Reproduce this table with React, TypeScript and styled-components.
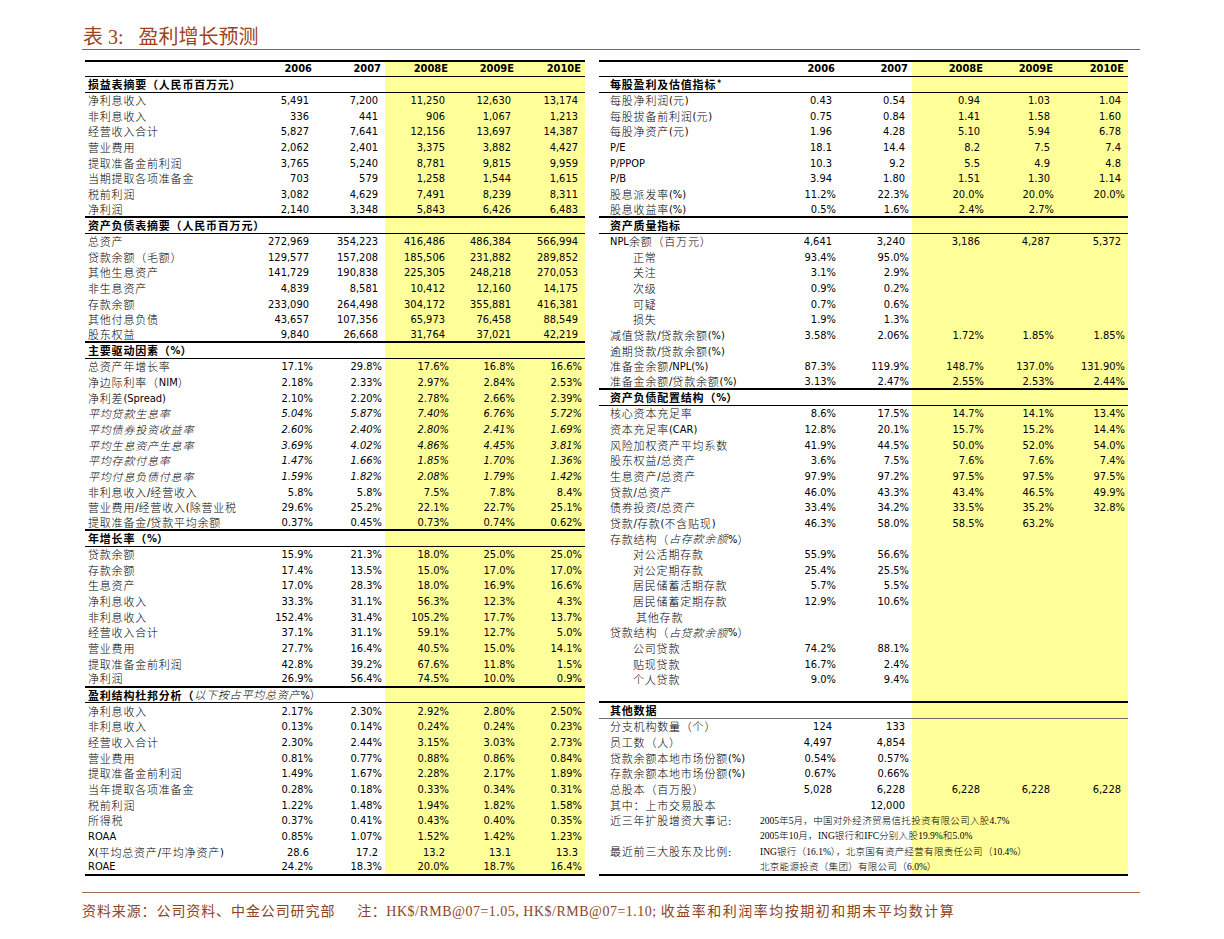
import React from "react";
import styled, { createGlobalStyle } from "styled-components";

type Rule = "thin" | "thick" | "soft";

type Line =
  | { kind: "section"; label: string; rule: Rule; sup?: string }
  | { kind: "row"; label: string; values: string[]; italic?: boolean; indent?: number; rule?: Rule }
  | { kind: "note"; label: string; note: string; rule?: Rule }
  | { kind: "blank"; rule?: Rule };

const YEARS = ["2006", "2007", "2008E", "2009E", "2010E"];
const LEFT_COLS = "173px 58px 69px 67px 66px 67px";
const RIGHT_COLS = "186px 54px 73px 75px 70px 71px";
const CJK = /([\u2E80-\u9FFF\u3000-\u303F\uFF00-\uFFEF]+)/;

const S = (label: string, rule: Rule = "thin", sup?: string): Line => ({ kind: "section", label, rule, sup });
const R = (label: string, values: string[] = [], opts: { italic?: boolean; indent?: number; rule?: Rule } = {}): Line => ({
  kind: "row",
  label,
  values,
  ...opts,
});
const N = (label: string, note: string, rule?: Rule): Line => ({ kind: "note", label, note, rule });

const leftLines: Line[] = [
  S("损益表摘要（人民币百万元）"),
  R("净利息收入", ["5,491", "7,200", "11,250", "12,630", "13,174"]),
  R("非利息收入", ["336", "441", "906", "1,067", "1,213"]),
  R("经营收入合计", ["5,827", "7,641", "12,156", "13,697", "14,387"]),
  R("营业费用", ["2,062", "2,401", "3,375", "3,882", "4,427"]),
  R("提取准备金前利润", ["3,765", "5,240", "8,781", "9,815", "9,959"]),
  R("当期提取各项准备金", ["703", "579", "1,258", "1,544", "1,615"]),
  R("税前利润", ["3,082", "4,629", "7,491", "8,239", "8,311"]),
  R("净利润", ["2,140", "3,348", "5,843", "6,426", "6,483"], { rule: "thick" }),
  S("资产负债表摘要（人民币百万元）"),
  R("总资产", ["272,969", "354,223", "416,486", "486,384", "566,994"]),
  R("贷款余额（毛额）", ["129,577", "157,208", "185,506", "231,882", "289,852"]),
  R("其他生息资产", ["141,729", "190,838", "225,305", "248,218", "270,053"]),
  R("非生息资产", ["4,839", "8,581", "10,412", "12,160", "14,175"]),
  R("存款余额", ["233,090", "264,498", "304,172", "355,881", "416,381"]),
  R("其他付息负债", ["43,657", "107,356", "65,973", "76,458", "88,549"]),
  R("股东权益", ["9,840", "26,668", "31,764", "37,021", "42,219"], { rule: "thick" }),
  S("主要驱动因素（%）"),
  R("总资产年增长率", ["17.1%", "29.8%", "17.6%", "16.8%", "16.6%"]),
  R("净边际利率（NIM）", ["2.18%", "2.33%", "2.97%", "2.84%", "2.53%"]),
  R("净利差(Spread)", ["2.10%", "2.20%", "2.78%", "2.66%", "2.39%"]),
  R("平均贷款生息率", ["5.04%", "5.87%", "7.40%", "6.76%", "5.72%"], { italic: true }),
  R("平均债券投资收益率", ["2.60%", "2.40%", "2.80%", "2.41%", "1.69%"], { italic: true }),
  R("平均生息资产生息率", ["3.69%", "4.02%", "4.86%", "4.45%", "3.81%"], { italic: true }),
  R("平均存款付息率", ["1.47%", "1.66%", "1.85%", "1.70%", "1.36%"], { italic: true }),
  R("平均付息负债付息率", ["1.59%", "1.82%", "2.08%", "1.79%", "1.42%"], { italic: true }),
  R("非利息收入/经营收入", ["5.8%", "5.8%", "7.5%", "7.8%", "8.4%"]),
  R("营业费用/经营收入(除营业税", ["29.6%", "25.2%", "22.1%", "22.7%", "25.1%"]),
  R("提取准备金/贷款平均余额", ["0.37%", "0.45%", "0.73%", "0.74%", "0.62%"], { rule: "thick" }),
  S("年增长率（%）"),
  R("贷款余额", ["15.9%", "21.3%", "18.0%", "25.0%", "25.0%"]),
  R("存款余额", ["17.4%", "13.5%", "15.0%", "17.0%", "17.0%"]),
  R("生息资产", ["17.0%", "28.3%", "18.0%", "16.9%", "16.6%"]),
  R("净利息收入", ["33.3%", "31.1%", "56.3%", "12.3%", "4.3%"]),
  R("非利息收入", ["152.4%", "31.4%", "105.2%", "17.7%", "13.7%"]),
  R("经营收入合计", ["37.1%", "31.1%", "59.1%", "12.7%", "5.0%"]),
  R("营业费用", ["27.7%", "16.4%", "40.5%", "15.0%", "14.1%"]),
  R("提取准备金前利润", ["42.8%", "39.2%", "67.6%", "11.8%", "1.5%"]),
  R("净利润", ["26.9%", "56.4%", "74.5%", "10.0%", "0.9%"], { rule: "thick" }),
  S("盈利结构杜邦分析（_以下按占平均总资产_%）"),
  R("净利息收入", ["2.17%", "2.30%", "2.92%", "2.80%", "2.50%"]),
  R("非利息收入", ["0.13%", "0.14%", "0.24%", "0.24%", "0.23%"]),
  R("经营收入合计", ["2.30%", "2.44%", "3.15%", "3.03%", "2.73%"]),
  R("营业费用", ["0.81%", "0.77%", "0.88%", "0.86%", "0.84%"]),
  R("提取准备金前利润", ["1.49%", "1.67%", "2.28%", "2.17%", "1.89%"]),
  R("当年提取各项准备金", ["0.28%", "0.18%", "0.33%", "0.34%", "0.31%"]),
  R("税前利润", ["1.22%", "1.48%", "1.94%", "1.82%", "1.58%"]),
  R("所得税", ["0.37%", "0.41%", "0.43%", "0.40%", "0.35%"]),
  R("ROAA", ["0.85%", "1.07%", "1.52%", "1.42%", "1.23%"]),
  R("X(平均总资产/平均净资产)", ["28.6", "17.2", "13.2", "13.1", "13.3"]),
  R("ROAE", ["24.2%", "18.3%", "20.0%", "18.7%", "16.4%"], { rule: "thick" }),
];

const IN = 23;

const rightLines: Line[] = [
  S("每股盈利及估值指标", "thin", "*"),
  R("每股净利润(元)", ["0.43", "0.54", "0.94", "1.03", "1.04"]),
  R("每股拔备前利润(元)", ["0.75", "0.84", "1.41", "1.58", "1.60"]),
  R("每股净资产(元)", ["1.96", "4.28", "5.10", "5.94", "6.78"]),
  R("P/E", ["18.1", "14.4", "8.2", "7.5", "7.4"]),
  R("P/PPOP", ["10.3", "9.2", "5.5", "4.9", "4.8"]),
  R("P/B", ["3.94", "1.80", "1.51", "1.30", "1.14"]),
  R("股息派发率(%)", ["11.2%", "22.3%", "20.0%", "20.0%", "20.0%"]),
  R("股息收益率(%)", ["0.5%", "1.6%", "2.4%", "2.7%", ""], { rule: "thick" }),
  S("资产质量指标"),
  R("NPL余额（百万元）", ["4,641", "3,240", "3,186", "4,287", "5,372"]),
  R("正常", ["93.4%", "95.0%"], { indent: IN }),
  R("关注", ["3.1%", "2.9%"], { indent: IN }),
  R("次级", ["0.9%", "0.2%"], { indent: IN }),
  R("可疑", ["0.7%", "0.6%"], { indent: IN }),
  R("损失", ["1.9%", "1.3%"], { indent: IN }),
  R("减值贷款/贷款余额(%)", ["3.58%", "2.06%", "1.72%", "1.85%", "1.85%"]),
  R("逾期贷款/贷款余额(%)"),
  R("准备金余额/NPL(%)", ["87.3%", "119.9%", "148.7%", "137.0%", "131.90%"]),
  R("准备金余额/贷款余额(%)", ["3.13%", "2.47%", "2.55%", "2.53%", "2.44%"], { rule: "thick" }),
  S("资产负债配置结构（%）"),
  R("核心资本充足率", ["8.6%", "17.5%", "14.7%", "14.1%", "13.4%"]),
  R("资本充足率(CAR)", ["12.8%", "20.1%", "15.7%", "15.2%", "14.4%"]),
  R("风险加权资产平均系数", ["41.9%", "44.5%", "50.0%", "52.0%", "54.0%"]),
  R("股东权益/总资产", ["3.6%", "7.5%", "7.6%", "7.6%", "7.4%"]),
  R("生息资产/总资产", ["97.9%", "97.2%", "97.5%", "97.5%", "97.5%"]),
  R("贷款/总资产", ["46.0%", "43.3%", "43.4%", "46.5%", "49.9%"]),
  R("债券投资/总资产", ["33.4%", "34.2%", "33.5%", "35.2%", "32.8%"]),
  R("贷款/存款(不含贴现)", ["46.3%", "58.0%", "58.5%", "63.2%", ""]),
  R("存款结构（_占存款余额_%）"),
  R("对公活期存款", ["55.9%", "56.6%"], { indent: IN }),
  R("对公定期存款", ["25.4%", "25.5%"], { indent: IN }),
  R("居民储蓄活期存款", ["5.7%", "5.5%"], { indent: IN }),
  R("居民储蓄定期存款", ["12.9%", "10.6%"], { indent: IN }),
  R("其他存款", [], { indent: IN + 3 }),
  R("贷款结构（_占贷款余额_%）"),
  R("公司贷款", ["74.2%", "88.1%"], { indent: IN }),
  R("贴现贷款", ["16.7%", "2.4%"], { indent: IN }),
  R("个人贷款", ["9.0%", "9.4%"], { indent: IN }),
  { kind: "blank", rule: "thick" },
  S("其他数据", "soft"),
  R("分支机构数量（个）", ["124", "133"]),
  R("员工数（人）", ["4,497", "4,854"]),
  R("贷款余额本地市场份额(%)", ["0.54%", "0.57%"]),
  R("存款余额本地市场份额(%)", ["0.67%", "0.66%"]),
  R("总股本（百万股）", ["5,028", "6,228", "6,228", "6,228", "6,228"]),
  R("其中：上市交易股本", ["", "12,000"]),
  N("近三年扩股增资大事记:", "2005年5月，中国对外经济贸易信托投资有限公司入股4.7%"),
  N("", "2005年10月，ING银行和IFC分别入股19.9%和5.0%"),
  N("最近前三大股东及比例:", "ING银行（16.1%），北京国有资产经营有限责任公司（10.4%）"),
  N("", "北京能源投资（集团）有限公司（6.0%）", "thick"),
];

const GlobalStyle = createGlobalStyle`
  html, body {
    margin: 0;
    padding: 0;
    background: #ffffff;
  }
  body {
    color: #000;
    font-family: "DejaVu Sans Condensed", "Liberation Sans", "Noto Sans CJK SC", sans-serif;
  }
`;

const Page = styled.div`
  width: 1058px;
  padding: 23px 0 0 82px;
`;

const Title = styled.h1`
  margin: 0;
  padding-left: 1px;
  height: 26px;
  line-height: 26px;
  font-family: "Liberation Serif", "Noto Sans CJK SC", serif;
  font-size: 20px;
  font-weight: 400;
  color: #a0431a;
  border-bottom: 1.5px solid #a55a32;
  white-space: nowrap;
`;

const TitleGap = styled.span`
  display: inline-block;
  width: 15px;
`;

const Tables = styled.div`
  display: flex;
  gap: 14px;
  align-items: flex-start;
  margin-top: 9.5px;
  padding-left: 3px;
`;

const TableBox = styled.div<{ $w: number }>`
  width: ${(p) => p.$w}px;
  border-top: 2px solid #000;
`;

const ruleCss = (r?: Rule) =>
  r === "thick" ? "2px solid #000" : r === "thin" ? "1px solid #000" : r === "soft" ? "1px solid #6e6e6e" : "none";

const Row = styled.div<{ $cols: string; $rule?: Rule }>`
  display: grid;
  grid-template-columns: ${(p) => p.$cols};
  grid-template-rows: 100%;
  height: 15.67px;
  box-sizing: border-box;
  border-bottom: ${(p) => ruleCss(p.$rule)};
  font-size: 11px;
  line-height: 13px;
`;

const LabelCell = styled.div<{ $indent: number; $italic?: boolean; $bold?: boolean }>`
  grid-column: 1;
  grid-row: 1;
  min-width: 0;
  display: flex;
  align-items: center;
  padding-left: ${(p) => p.$indent}px;
  white-space: nowrap;
  font-style: ${(p) => (p.$italic ? "italic" : "normal")};
  font-weight: ${(p) => (p.$bold ? 700 : 300)};
`;

const ValueCell = styled.div<{ $col: number; $hl: boolean; $pad: number; $italic?: boolean; $bold?: boolean }>`
  grid-column: ${(p) => p.$col};
  grid-row: 1;
  display: flex;
  align-items: center;
  justify-content: flex-end;
  padding-right: ${(p) => p.$pad}px;
  white-space: nowrap;
  background: ${(p) => (p.$hl ? "#ffff99" : "transparent")};
  font-style: ${(p) => (p.$italic ? "italic" : "normal")};
  font-weight: ${(p) => (p.$bold ? 700 : 400)};
`;

const Han = styled.span<{ $ls: number }>`
  font-family: "Noto Sans CJK SC", sans-serif;
  letter-spacing: ${(p) => p.$ls}px;
`;

const Slant = styled.span`
  font-style: italic;
  font-weight: 300;
`;

const Plain = styled.span`
  font-weight: 300;
`;

const Sup = styled.sup`
  font-size: 8px;
  line-height: 0;
  vertical-align: 4px;
  margin-left: 1px;
`;

const NoteLine = styled.div`
  grid-column: 1 / -1;
  grid-row: 1;
  z-index: 1;
  display: flex;
  align-items: center;
  white-space: nowrap;
  font-weight: 300;
`;

const NoteLabel = styled.span`
  display: inline-block;
  box-sizing: border-box;
  width: 161px;
  padding-left: 11px;
`;

const NoteText = styled.span`
  font-family: "Liberation Serif", "Noto Sans CJK SC", serif;
  font-size: 9.5px;
`;

const Footer = styled.div`
  margin-top: 16px;
  border-top: 1.5px solid #a56a4a;
  padding-top: 8px;
  line-height: 18px;
  font-family: "Liberation Serif", "Noto Sans CJK SC", serif;
  font-size: 14px;
  letter-spacing: 0.5px;
  color: #8e4424;
  white-space: nowrap;
`;

const Spacer = styled.span`
  display: inline-block;
  width: 22px;
`;

function Runs({ text, ls }: { text: string; ls: number }) {
  return (
    <>
      {text
        .split(CJK)
        .filter(Boolean)
        .map((s, i) =>
          CJK.test(s) ? (
            <Han key={i} $ls={ls}>
              {s}
            </Han>
          ) : (
            <React.Fragment key={i}>{s}</React.Fragment>
          )
        )}
    </>
  );
}

// "_" marks an italic part of a label, e.g. 存款结构（_占存款余额_%）
function LabelText({ text, bold }: { text: string; bold?: boolean }) {
  const parts = text.split("_");
  return (
    <>
      {parts.map((p, i) =>
        i % 2 === 1 ? (
          <Slant key={i}>
            <Runs text={p} ls={0.8} />
          </Slant>
        ) : bold && i > 0 ? (
          <Plain key={i}>
            <Runs text={p} ls={0.8} />
          </Plain>
        ) : (
          <Runs key={i} text={p} ls={0.8} />
        )
      )}
    </>
  );
}

const padFor = (v: string) => (v.endsWith("%") ? 3 : 7);

function Values({ values, italic, bold, pad }: { values: string[]; italic?: boolean; bold?: boolean; pad?: number }) {
  return (
    <>
      {[0, 1, 2, 3, 4].map((i) => {
        const v = values[i] ?? "";
        return (
          <ValueCell key={i} $col={i + 2} $hl={i >= 2} $pad={pad ?? padFor(v)} $italic={italic} $bold={bold}>
            {v}
          </ValueCell>
        );
      })}
    </>
  );
}

function TableLine({ line, cols, indent }: { line: Line; cols: string; indent: number }) {
  if (line.kind === "section") {
    return (
      <Row $cols={cols} $rule={line.rule}>
        <LabelCell $indent={indent} $bold>
          <LabelText text={line.label} bold />
          {line.sup && <Sup>{line.sup}</Sup>}
        </LabelCell>
        <Values values={[]} />
      </Row>
    );
  }
  if (line.kind === "note") {
    return (
      <Row $cols={cols} $rule={line.rule}>
        <Values values={[]} />
        <NoteLine>
          <NoteLabel>
            <Runs text={line.label} ls={0.8} />
          </NoteLabel>
          <NoteText>
            <Runs text={line.note} ls={0.3} />
          </NoteText>
        </NoteLine>
      </Row>
    );
  }
  if (line.kind === "blank") {
    return (
      <Row $cols={cols} $rule={line.rule}>
        <Values values={[]} />
      </Row>
    );
  }
  return (
    <Row $cols={cols} $rule={line.rule}>
      <LabelCell $indent={indent + (line.indent ?? 0)} $italic={line.italic}>
        <LabelText text={line.label} />
      </LabelCell>
      <Values values={line.values} italic={line.italic} />
    </Row>
  );
}

function DataTable({ width, cols, indent, lines }: { width: number; cols: string; indent: number; lines: Line[] }) {
  return (
    <TableBox $w={width}>
      <Row $cols={cols} $rule="thin">
        <LabelCell $indent={indent} />
        <Values values={YEARS} bold pad={4} />
      </Row>
      {lines.map((ln, i) => (
        <TableLine key={i} line={ln} cols={cols} indent={indent} />
      ))}
    </TableBox>
  );
}

export default function App() {
  return (
    <>
      <GlobalStyle />
      <Page>
        <Title>
          <Runs text="表 3:" ls={0} />
          <TitleGap />
          <Runs text="盈利增长预测" ls={0} />
        </Title>
        <Tables>
          <DataTable width={500} cols={LEFT_COLS} indent={3} lines={leftLines} />
          <DataTable width={529} cols={RIGHT_COLS} indent={11} lines={rightLines} />
        </Tables>
        <Footer>
          <Runs text="资料来源：公司资料、中金公司研究部" ls={0.9} />
          <Spacer />
          <Runs text="注：" ls={0.5} />
          HK$/RMB@07=1.05, HK$/RMB@07=1.10;{" "}
          <Runs text="收益率和利润率均按期初和期末平均数计算" ls={1.5} />
        </Footer>
      </Page>
    </>
  );
}
